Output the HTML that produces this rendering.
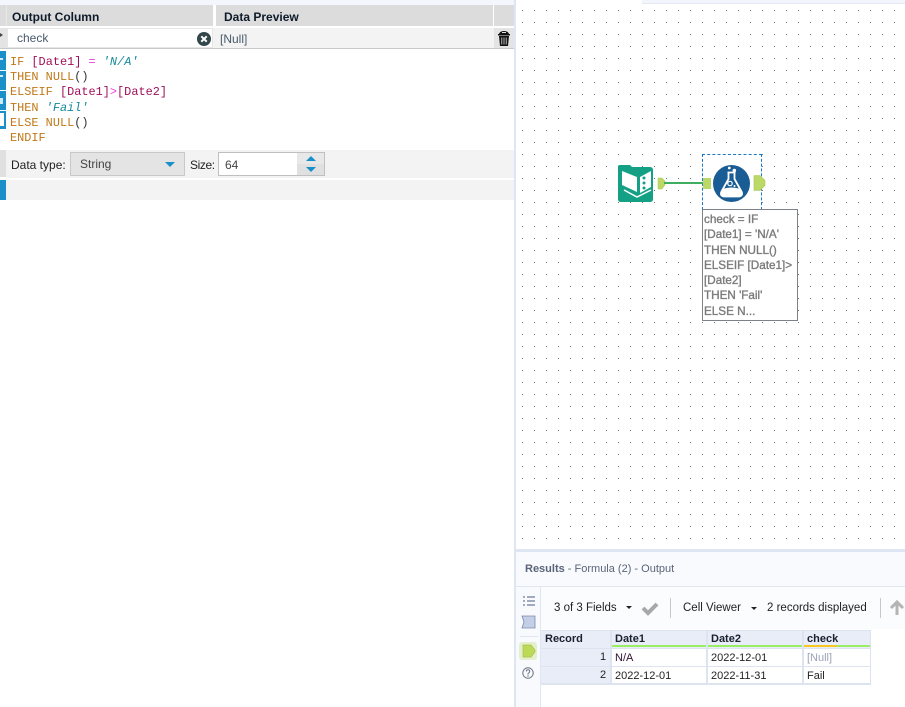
<!DOCTYPE html>
<html><head><meta charset="utf-8">
<style>
html,body{margin:0;padding:0;background:#fff}
body{width:905px;height:707px;position:relative;overflow:hidden;font-family:"Liberation Sans",sans-serif;font-size:11px;color:#222}
.a{position:absolute}
.t{position:absolute;white-space:pre;line-height:16px}
.ls{font-family:"Liberation Sans",sans-serif;font-size:12px}
.code{position:absolute;left:10px;font-family:"Liberation Mono",monospace;font-size:11.9px;line-height:15.2px;white-space:pre;color:#c07818}
.code b{font-weight:normal;color:#a0105a}
.code i{color:#128a9a}
.code u{text-decoration:none;color:#e040e0}
.hd{font-family:"Liberation Sans",sans-serif;font-weight:bold;font-size:12px}
.cell{position:absolute;font-family:"Liberation Sans",sans-serif;font-size:11px;line-height:16px;white-space:pre;color:#222}
.th{position:absolute;background:#e8edf7;top:631px;height:17px}
.td{position:absolute;background:#fff}
.rn{position:absolute;background:#e8edf7}
</style></head><body>

<!-- left panel -->
<div class="a" style="left:0;top:0;width:514px;height:5px;background:#f3f7fd"></div>
<div class="a" style="left:0;top:5px;width:514px;height:21px;background:#dcdcdc"></div>
<div class="a" style="left:6px;top:5px;width:1px;height:21px;background:#e8e8e8"></div>
<div class="a" style="left:213px;top:5px;width:3px;height:21px;background:#fff"></div>
<div class="a" style="left:493px;top:5px;width:1px;height:21px;background:#fff"></div>
<div class="t hd" style="left:12px;top:9px;color:#0e1a2a">Output Column</div>
<div class="t hd" style="left:224px;top:9px;color:#0e1a2a">Data Preview</div>

<div class="a" style="left:0;top:28px;width:514px;height:20px;background:#f3f3f3"></div>
<div class="a" style="left:0;top:28px;width:7px;height:20px;background:#e4e4e4"></div>
<div class="a" style="left:0;top:48px;width:514px;height:1px;background:#c8c8c8"></div>
<div class="a" style="left:7px;top:28px;width:206px;height:20px;background:#fff;border:1px solid #e6e6e6;box-sizing:border-box"></div>
<div class="t ls" style="left:17px;top:30px;color:#4a5a6a">check</div>
<svg class="a" style="left:196px;top:31px" width="16" height="16" viewBox="0 0 16 16"><circle cx="8" cy="8" r="7" fill="#33474a"/><path d="M5.300 5.300L10.700 10.700M10.700 5.300L5.300 10.700" stroke="#fff" stroke-width="2"/></svg>
<div class="t ls" style="left:220px;top:31px;color:#4a5a6a">[Null]</div>
<div class="a" style="left:494px;top:28px;width:20px;height:20px;background:#e4e4e4"></div>
<svg class="a" style="left:497px;top:29px" width="14" height="18" viewBox="0 0 14 18"><path d="M1 5h12v1.500H1zM2 7h10l-1 10H3z" fill="#111"/><path d="M2 5C3 1 11 1 12 5" fill="#111"/><path d="M5 3.500h4" stroke="#ddd" stroke-width="1"/><path d="M4.800 8.500v7M7 8.500v7M9.200 8.500v7" stroke="#ddd" stroke-width=".8"/></svg>
<div class="a" style="left:0;top:33px;width:0;height:0;border-left:3px solid #444;border-top:2px solid transparent;border-bottom:2px solid transparent"></div>

<!-- side tabs -->
<div class="a" style="left:0;top:51px;width:6px;height:19px;background:#1a8fc8"></div>
<div class="a" style="left:0;top:58px;width:3px;height:2px;background:#cfe8f5"></div>
<div class="a" style="left:0;top:71px;width:6px;height:19px;background:#1a8fc8"></div>
<div class="a" style="left:0;top:75px;width:3px;height:2px;background:#cfe8f5"></div>
<div class="a" style="left:0;top:91px;width:6px;height:19px;background:#1a8fc8"></div>
<div class="a" style="left:0;top:98px;width:3px;height:6px;background:#cfe8f5"></div>
<div class="a" style="left:0;top:111px;width:6px;height:18px;background:#1a8fc8"></div>
<div class="a" style="left:0;top:113px;width:4px;height:13px;background:#fff"></div>
<div class="a" style="left:0;top:150px;width:6px;height:27px;background:#e0e0e0"></div>
<div class="a" style="left:0;top:180px;width:6px;height:20px;background:#1a8fc8"></div>

<div class="code" style="top:55px">IF <b>[Date1]</b> <u>=</u> <i>'N/A'</i>
THEN NULL<span style="color:#333">()</span>
ELSEIF <b>[Date1]</b><u>&gt;</u><b>[Date2]</b>
THEN <i>'Fail'</i>
ELSE NULL<span style="color:#333">()</span>
ENDIF</div>

<div class="a" style="left:6px;top:150px;width:508px;height:28px;background:#f3f3f3"></div>
<div class="a" style="left:6px;top:180px;width:508px;height:20px;background:#f3f3f3"></div>
<div class="t ls" style="left:11px;top:157px;color:#222">Data type:</div>
<div class="a" style="left:70px;top:152px;width:115px;height:24px;background:#e4e4e4;border:1px solid #c8c8c8;box-sizing:border-box"></div>
<div class="t ls" style="left:80px;top:156px;color:#444">String</div>
<div class="a" style="left:165px;top:162px;width:0;height:0;border-top:5px solid #1a8fc8;border-left:5px solid transparent;border-right:5px solid transparent"></div>
<div class="t ls" style="left:190px;top:157px;color:#222;letter-spacing:-.4px">Size:</div>
<div class="a" style="left:218px;top:152px;width:107px;height:24px;background:#fff;border:1px solid #c0c0c0;box-sizing:border-box"></div>
<div class="t ls" style="left:225px;top:157px;color:#444">64</div>
<div class="a" style="left:297px;top:153px;width:27px;height:11px;background:#e8e8e8"></div>
<div class="a" style="left:297px;top:164px;width:27px;height:11px;background:#e0e0e0"></div>
<div class="a" style="left:306px;top:156px;width:0;height:0;border-bottom:5px solid #1a8fc8;border-left:5px solid transparent;border-right:5px solid transparent"></div>
<div class="a" style="left:306px;top:167px;width:0;height:0;border-top:5px solid #1a8fc8;border-left:5px solid transparent;border-right:5px solid transparent"></div>

<!-- divider -->
<div class="a" style="left:514px;top:0;width:2px;height:707px;background:#dfe6f3"></div>

<!-- canvas -->
<svg class="a" style="left:517px;top:0" width="388" height="549">
<defs><pattern id="d" x="5" y="10" width="12" height="12" patternUnits="userSpaceOnUse"><rect width="1" height="1" fill="#777"/></pattern></defs>
<rect x="0" y="0" width="388" height="549" fill="url(#d)"/>
</svg>
<div class="a" style="left:642px;top:0;width:263px;height:3px;background:#f3f5fc;border-bottom:1px solid #e4e9f5"></div>

<!-- workflow -->
<div class="a" style="left:702px;top:154px;width:60px;height:56px;border:1px dashed #1a78c8;border-bottom:none;box-sizing:border-box;background:#fff"></div>
<svg class="a" style="left:615px;top:163px" width="52" height="42" viewBox="0 0 52 42">
<path d="M3 4q0-2 2-2h10l2 2h18q3 0 3 3V36q0 3-3 3H6q-3 0-3-3z" fill="#14a085"/>
<path d="M7 8l15 6V29L7 22z" fill="#fff"/>
<path d="M36 8l-11 6V30l11-6z" fill="#fff"/>
<path d="M9 27l13 7 14-7" fill="none" stroke="#fff" stroke-width="1.500"/>
<circle cx="29" cy="15" r="1.500" fill="#14a085"/><circle cx="29" cy="20" r="1.500" fill="#14a085"/><circle cx="29" cy="25" r="1.500" fill="#14a085"/>
<path d="M43 15h4l3 3v4l-3 4h-4z" fill="#bcd968" stroke="#a4c850" stroke-width=".5"/>
</svg>
<div class="a" style="left:664px;top:182px;width:40px;height:2px;background:#3fae60"></div>
<div class="a" style="left:703px;top:178px;width:8px;height:11px;background:#bcd968"></div>
<svg class="a" style="left:712px;top:163px" width="54" height="40" viewBox="0 0 54 40">
<circle cx="19.500" cy="20.500" r="18.500" fill="#1a5c94"/>
<path d="M15.500 9.500h8M16.500 9.500V16L9.500 28.500q-2 4.500 3 5h14q5-.5 3-5L22.500 16V9.500" fill="none" stroke="#fff" stroke-width="1.800"/>
<path d="M10.500 26q9-3 18 0l1 3q1 4-3.500 4.500h-13q-4.500-.5-3.500-4.500z" fill="#fff"/>
<circle cx="18" cy="20.500" r="2.200" fill="none" stroke="#fff" stroke-width="1.200"/>
<circle cx="22.500" cy="23" r="1" fill="#fff"/>
<circle cx="17.300" cy="5" r="1.400" fill="#fff"/><circle cx="22.300" cy="7.500" r="1.800" fill="#fff"/>
<path d="M42 12.500h6l5 5v5l-5 5h-6z" fill="#bcd968" stroke="#a4c850" stroke-width=".6"/>
</svg>
<div class="a" style="left:702px;top:209px;width:96px;height:112px;background:#fff;border:1px solid #7c8288;box-sizing:border-box"></div>
<div class="a" style="left:704px;top:212px;font-family:'Liberation Sans',sans-serif;font-size:11.700px;-webkit-text-stroke:.35px #7a7a7a;line-height:15.300px;color:#7a7a7a;white-space:pre;">check = IF
[Date1] = 'N/A'
THEN NULL()
ELSEIF [Date1]&gt;
[Date2]
THEN 'Fail'
ELSE N...</div>

<!-- results -->
<div class="a" style="left:516px;top:549px;width:389px;height:3px;background:#dfe6f3"></div>
<div class="a" style="left:516px;top:552px;width:389px;height:34px;background:#f8fafd"></div>
<div class="a" style="left:516px;top:586px;width:389px;height:1px;background:#e0e6f2"></div>
<div class="t ls" style="left:525px;top:561px;font-size:11px;color:#5a6478"><b>Results</b> - Formula (2) - Output</div>
<div class="a" style="left:516px;top:587px;width:24px;height:120px;background:#f8fafd"></div>
<div class="a" style="left:540px;top:587px;width:1px;height:120px;background:#e0e6f2"></div>
<div class="a" style="left:541px;top:587px;width:364px;height:42px;background:#fbfcfe"></div>

<svg class="a" style="left:521px;top:595px" width="16" height="14"><path d="M6 2h8M6 6h8M6 10h8M2 2h2M2 6h2M2 10h2" stroke="#4a5c80" stroke-width="1"/></svg>
<svg class="a" style="left:521px;top:615px" width="16" height="14"><path d="M1 1h13v12H1l2-6z" fill="#c3cfe6" stroke="#7c8aa8" stroke-width=".8"/></svg>
<div class="a" style="left:520px;top:636px;width:18px;height:1px;background:#e0e6f2"></div>
<div class="a" style="left:519px;top:642px;width:18px;height:18px;background:#e4f0cc;border-radius:3px"></div>
<svg class="a" style="left:522px;top:644px" width="14" height="14"><path d="M1 1h8l4 5v2l-4 5H1z" fill="#bcd958" stroke="#a8c048" stroke-width=".7"/></svg>
<svg class="a" style="left:521px;top:666px" width="14" height="14" viewBox="0 0 14 14"><circle cx="7" cy="7" r="5.200" fill="none" stroke="#6a7484" stroke-width="1"/><path d="M5.300 5.500q0-1.700 1.700-1.700t1.700 1.700Q8.700 6.500 7 7.500v1" fill="none" stroke="#6a7484"/><circle cx="7" cy="10" r=".7" fill="#6a7484"/></svg>

<div class="t ls" style="left:554px;top:600px;color:#222;font-size:11.500px">3 of 3 Fields</div>
<div class="a" style="left:626px;top:606px;width:0;height:0;border-top:3px solid #222;border-left:3px solid transparent;border-right:3px solid transparent"></div>
<svg class="a" style="left:641px;top:601px" width="18" height="15"><path d="M2 7l5 5L16 3" fill="none" stroke="#a8a8a8" stroke-width="4"/></svg>
<div class="a" style="left:670px;top:598px;width:1px;height:20px;background:#c8c8c8"></div>
<div class="t ls" style="left:683px;top:600px;font-size:11.500px">Cell Viewer</div>
<div class="a" style="left:751px;top:607px;width:0;height:0;border-top:3px solid #222;border-left:3px solid transparent;border-right:3px solid transparent"></div>
<div class="t ls" style="left:767px;top:600px;font-size:11.500px">2 records displayed</div>
<div class="a" style="left:880px;top:598px;width:1px;height:20px;background:#c8c8c8"></div>
<svg class="a" style="left:889px;top:599px" width="16" height="18"><path d="M8 16V3M2 9l6-6 6 6" fill="none" stroke="#b4b4b4" stroke-width="3"/></svg>

<!-- table -->
<div class="a" style="left:541px;top:630px;width:330px;height:55px;background:#dde4f0"></div>
<div class="th" style="left:541px;width:69px"></div>
<div class="th" style="left:612px;width:94px"></div>
<div class="th" style="left:708px;width:94px"></div>
<div class="th" style="left:804px;width:66px"></div>
<div class="a" style="left:612px;top:645px;width:94px;height:2px;background:#99ee66"></div>
<div class="a" style="left:708px;top:645px;width:94px;height:2px;background:#99ee66"></div>
<div class="a" style="left:804px;top:645px;width:66px;height:2px;background:#99ee66"></div>
<div class="a" style="left:804px;top:645px;width:33px;height:2px;background:#f8c820"></div>
<div class="cell" style="left:545px;top:631px;font-weight:bold;color:#1a2030">Record</div>
<div class="cell" style="left:615px;top:631px;font-weight:bold;color:#1a2030">Date1</div>
<div class="cell" style="left:711px;top:631px;font-weight:bold;color:#1a2030">Date2</div>
<div class="cell" style="left:807px;top:631px;font-weight:bold;color:#1a2030">check</div>

<div class="rn" style="left:541px;top:649px;width:69px;height:17px"></div>
<div class="rn" style="left:541px;top:667px;width:69px;height:16px"></div>
<div class="td" style="left:612px;top:649px;width:94px;height:17px"></div>
<div class="td" style="left:708px;top:649px;width:94px;height:17px"></div>
<div class="td" style="left:804px;top:649px;width:66px;height:17px"></div>
<div class="td" style="left:612px;top:667px;width:94px;height:16px"></div>
<div class="td" style="left:708px;top:667px;width:94px;height:16px"></div>
<div class="td" style="left:804px;top:667px;width:66px;height:16px"></div>
<div class="cell" style="left:600px;top:649px">1</div>
<div class="cell" style="left:600px;top:667px">2</div>
<div class="cell" style="left:615px;top:650px;color:#301030">N/A</div>
<div class="cell" style="left:711px;top:650px">2022-12-01</div>
<div class="cell" style="left:807px;top:650px;color:#9aa2b8">[Null]</div>
<div class="cell" style="left:615px;top:668px">2022-12-01</div>
<div class="cell" style="left:711px;top:668px">2022-11-31</div>
<div class="cell" style="left:807px;top:668px">Fail</div>
</body></html>
